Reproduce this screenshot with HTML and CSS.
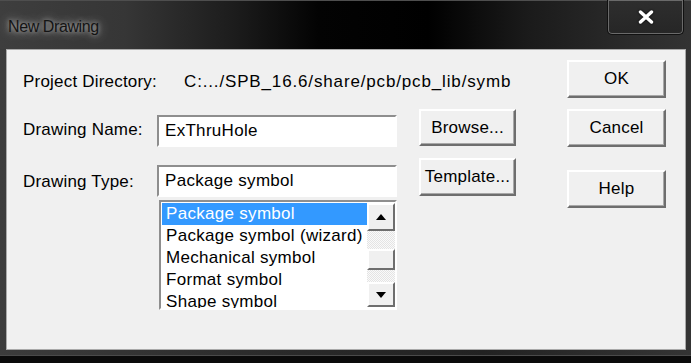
FILE: index.html
```html
<!DOCTYPE html>
<html lang="en">
<head>
    <meta charset="UTF-8">
    <title>New Drawing</title>
    <link rel="stylesheet" href="styles.css">
</head>
<body>

<div class="window">
    <!-- Title bar -->
    <div class="titlebar">
        <span class="title">New Drawing</span>
        <button class="close" aria-label="Close">
            <svg width="16" height="14" viewBox="0 0 16 14">
                <path d="M2.5 2 L13.5 12 M13.5 2 L2.5 12" stroke="#fff" stroke-width="3.4" stroke-linecap="round"/>
            </svg>
        </button>
    </div>

    <div class="frame">
        <div class="client">
            <div class="form">
                <div class="row row-dir">
                    <span class="label">Project Directory:</span>
                    <span class="path">C:.../SPB_16.6/share/pcb/pcb_lib/symb</span>
                </div>
                <div class="row row-name">
                    <span class="label">Drawing Name:</span>
                    <input class="field" type="text" value="ExThruHole">
                    <button class="btn btn-mid">Browse...</button>
                </div>
                <div class="row row-type">
                    <span class="label">Drawing Type:</span>
                    <input class="field" type="text" value="Package symbol">
                    <button class="btn btn-mid">Template...</button>
                </div>

                <!-- Type list -->
                <div class="listbox">
                    <ul class="options">
                        <li class="selected">Package symbol</li>
                        <li>Package symbol (wizard)</li>
                        <li>Mechanical symbol</li>
                        <li>Format symbol</li>
                        <li>Shape symbol</li>
                    </ul>
                    <div class="scrollbar">
                        <div class="sb-btn sb-up"><span class="arrow-up"></span></div>
                        <div class="sb-track"><div class="sb-thumb"></div></div>
                        <div class="sb-btn sb-down"><span class="arrow-down"></span></div>
                    </div>
                </div>
            </div>

            <div class="side">
                <button class="btn">OK</button>
                <button class="btn btn-cancel">Cancel</button>
                <button class="btn btn-help">Help</button>
            </div>
        </div>
    </div>
</div>

</body>
</html>
```

FILE: styles.css
```css
body {
    margin: 0;
    width: 691px;
    height: 363px;
    overflow: hidden;
    background-color: #0a0a0a;
    font-family: "Liberation Sans", Arial, sans-serif;
}
.window {
    height: 363px;
    box-sizing: border-box;
    padding-bottom: 7px;
    display: flex;
    flex-direction: column;
    background-color: #0a0a0a;
}
.titlebar {
    height: 49px;
    flex: none;
    box-sizing: border-box;
    display: flex;
    align-items: flex-start;
    border-top: 1px solid #4e4e4e;
    background: linear-gradient(90deg, #3e3e3e 0%, #363636 18%, #1c1c1c 34%, #030303 46%, #000 62%, #1a1a1a 76%, #2c2c2c 92%, #333 100%);
}
.title {
    margin: 16px 0 0 8px;
    font-size: 16px;
    line-height: 20px;
    letter-spacing: -0.4px;
    color: #141414;
    text-shadow: 0 0 5px rgba(255, 255, 255, 0.6), 0 0 12px rgba(255, 255, 255, 0.4), 0 0 20px rgba(255, 255, 255, 0.25);
}
.close {
    margin: -1px 7px 0 auto;
    width: 77px;
    height: 35px;
    padding: 0;
    display: flex;
    align-items: center;
    justify-content: center;
    background: linear-gradient(#2e2e2e, #262626);
    border: 1px solid #111;
    border-top: none;
    border-radius: 0 0 5px 5px;
    box-shadow: inset 0 0 0 1px #6a6a6a;
}
.close svg {
    filter: drop-shadow(0 0 1px #000);
}
.frame {
    flex: 1;
    display: flex;
    padding: 0 5px 5px 6px;
    border-bottom: 1px solid #4a4a4a;
    background: linear-gradient(90deg, #3c3c3c, #2a2a2a 40%, #222 70%, #343434);
}
.client {
    flex: 1;
    display: flex;
    padding: 10px 19px 0 16px;
    background-color: #f0f0f0;
    border: 1px solid #a9a9a9;
    color: #000;
    font-size: 17px;
}
.form {
    flex: 1;
    display: flex;
    flex-direction: column;
}
.side {
    width: 99px;
    display: flex;
    flex-direction: column;
}
.row {
    display: flex;
    align-items: flex-start;
}
.label {
    width: 134px;
    flex: none;
    line-height: 20px;
    letter-spacing: 0.2px;
}
.row-dir {
    height: 44px;
    align-items: center;
}
.path {
    margin-left: 27px;
    letter-spacing: 0.85px;
    white-space: nowrap;
}
.row-name {
    margin-top: 5px;
    height: 38px;
}
.row-name .label {
    margin-top: 11px;
}
.row-type {
    margin-top: 10px;
    height: 40px;
}
.row-type .label {
    margin-top: 15px;
}
.field {
    width: 240px;
    height: 32px;
    box-sizing: border-box;
    margin: 6px 0 0 0;
    padding: 0 0 0 6px;
    border: 2px solid;
    border-color: #8e8e8e #fff #fff #8e8e8e;
    background-color: #fff;
    font-family: "Liberation Sans", Arial, sans-serif;
    font-size: 17px;
    letter-spacing: 0.3px;
    color: #000;
    outline: none;
}
.row-type .field {
    margin-top: 8px;
}
.btn {
    height: 38px;
    padding: 0;
    box-sizing: border-box;
    background-color: #f0f0f0;
    border: 2px solid;
    border-color: #fff #6e6e6e #6e6e6e #fff;
    box-shadow: inset -1px -1px #a8a8a8;
    font-family: "Liberation Sans", Arial, sans-serif;
    font-size: 17px;
    letter-spacing: 0.2px;
    color: #000;
}
.btn-mid {
    margin-left: 22px;
    width: 97px;
    height: 37px;
}
.row-type .btn-mid {
    margin-top: 1px;
    height: 38px;
}
.btn-cancel {
    margin-top: 11px;
}
.btn-help {
    margin-top: 23px;
}
.listbox {
    margin: 3px 0 0 136px;
    width: 238px;
    height: 110px;
    box-sizing: border-box;
    display: flex;
    border: 2px solid;
    border-color: #8e8e8e #fff #fff #8e8e8e;
    background-color: #fff;
}
.options {
    flex: 1;
    margin: 0;
    padding: 1px 0 0 1px;
    list-style: none;
    overflow: hidden;
}
.options li {
    height: 22px;
    line-height: 22px;
    padding-left: 4px;
    letter-spacing: 0.3px;
    white-space: nowrap;
}
.options .selected {
    background-color: #3399ff;
    color: #fff;
}
.scrollbar {
    width: 28px;
    display: flex;
    flex-direction: column;
    padding: 1px 0;
    box-sizing: border-box;
}
.sb-btn,
.sb-thumb {
    box-sizing: border-box;
    background-color: #f0f0f0;
    border: 2px solid;
    border-color: #fff #6e6e6e #6e6e6e #fff;
    display: flex;
    align-items: center;
    justify-content: center;
}
.sb-up {
    height: 28px;
}
.sb-down {
    height: 25px;
}
.sb-track {
    flex: 1;
    padding-top: 18px;
    background: repeating-conic-gradient(#fafafa 0 25%, #e4e4e4 0 50%) 0 0 / 2px 2px;
}
.sb-thumb {
    height: 21px;
}
.arrow-up {
    width: 0;
    height: 0;
    border-left: 5px solid transparent;
    border-right: 5px solid transparent;
    border-bottom: 6px solid #000;
}
.arrow-down {
    width: 0;
    height: 0;
    border-left: 5px solid transparent;
    border-right: 5px solid transparent;
    border-top: 6px solid #000;
}
```
